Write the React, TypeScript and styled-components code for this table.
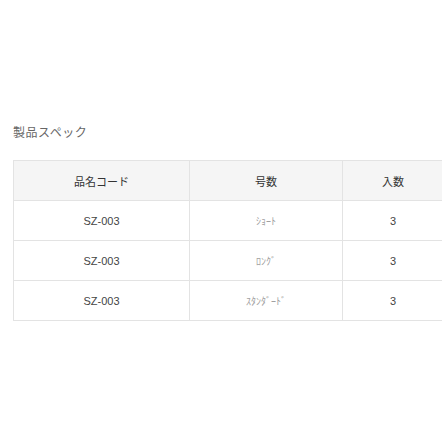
import styled, { createGlobalStyle } from "styled-components";

const GlobalStyle = createGlobalStyle`
  html, body {
    margin: 0;
    padding: 0;
    background: #fff;
    overflow: hidden;
  }
  body {
    font-family: "Liberation Sans", "Noto Sans CJK JP", sans-serif;
  }
`;

const specs = [
  { code: "SZ-003", size: "ｼｮｰﾄ", count: 3 },
  { code: "SZ-003", size: "ﾛﾝｸﾞ", count: 3 },
  { code: "SZ-003", size: "ｽﾀﾝﾀﾞｰﾄﾞ", count: 3 },
];

export default function App() {
  return (
    <Page>
      <GlobalStyle />
      <Title>製品スペック</Title>
      <Table>
        <colgroup>
          <col style={{ width: 176 }} />
          <col style={{ width: 153 }} />
          <col />
        </colgroup>
        <thead>
          <tr>
            <Th>品名コード</Th>
            <Th>号数</Th>
            <Th>入数</Th>
          </tr>
        </thead>
        <tbody>
          {specs.map((s, i) => (
            <tr key={i}>
              <Td>{s.code}</Td>
              <Td $light>{s.size}</Td>
              <Td>{s.count}</Td>
            </tr>
          ))}
        </tbody>
      </Table>
    </Page>
  );
}

const Page = styled.div`
  padding: 123px 0 0 13px;
`;

const Title = styled.h2`
  margin: 0 0 19px;
  font-family: "Noto Sans CJK JP", sans-serif;
  font-size: 12px;
  font-weight: 400;
  line-height: 18px;
  color: #666;
  letter-spacing: 0.5px;
`;

const Table = styled.table`
  width: 431px;
  border-collapse: collapse;
  table-layout: fixed;
`;

const Th = styled.th`
  height: 39px;
  padding: 0;
  background: #f5f5f5;
  border: 1px solid #e3e3e3;
  font-family: "Noto Sans CJK JP", sans-serif;
  font-size: 11px;
  font-weight: 400;
  color: #333;
  text-align: center;
`;

const Td = styled.td<{ $light?: boolean }>`
  height: 39px;
  padding: 0;
  border: 1px solid #e3e3e3;
  font-size: ${(p) => (p.$light ? "10px" : "11px")};
  color: ${(p) => (p.$light ? "#a0a0a0" : "#444")};
  text-align: center;
`;
